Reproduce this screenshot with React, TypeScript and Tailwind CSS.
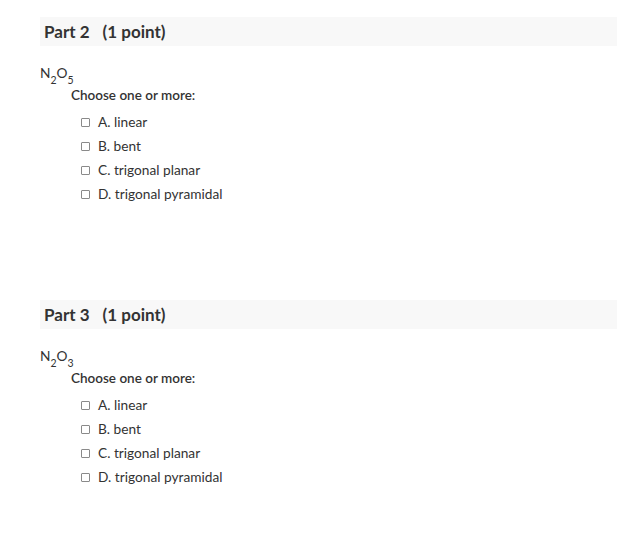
const OPTIONS = ["A. linear", "B. bent", "C. trigonal planar", "D. trigonal pyramidal"]

function Part({ num, sub }: { num: number; sub: string }) {
  return (
    <section>
      <div className="flex h-[29px] items-center bg-[#f8f8f8] pl-[4px] text-[17px] font-bold text-[#333]">
        <span>Part {num}</span>
        <span className="ml-[13px]">(1 point)</span>
      </div>
      <div className="mt-[17px] text-[13.7px] leading-[20px] text-[#333]">
        N<sub className="align-[-3px] text-[10.5px]">2</sub>O<sub className="align-[-3px] text-[10.5px]">{sub}</sub>
      </div>
      <div className="ml-[31px] mt-[2px] text-[13.5px] font-semibold leading-[20px] text-[#333]">
        Choose one or more:
      </div>
      <ul className="ml-[41px] mt-[5px] flex flex-col">
        {OPTIONS.map((opt) => (
          <li key={opt} className="flex h-[24px] items-center text-[13.7px] text-[#333]">
            <span className="mr-[8px] h-[9px] w-[9px] rounded-[1px] border border-[#8a8a8a] bg-white" />
            <span>{opt}</span>
          </li>
        ))}
      </ul>
    </section>
  )
}

export default function App() {
  return (
    <div className="flex h-[534px] flex-col gap-[94px] overflow-hidden bg-white pl-[40px] pt-[17px]" style={{ fontFamily: "Lato, sans-serif" }}>
      <Part num={2} sub="5" />
      <Part num={3} sub="3" />
    </div>
  )
}
